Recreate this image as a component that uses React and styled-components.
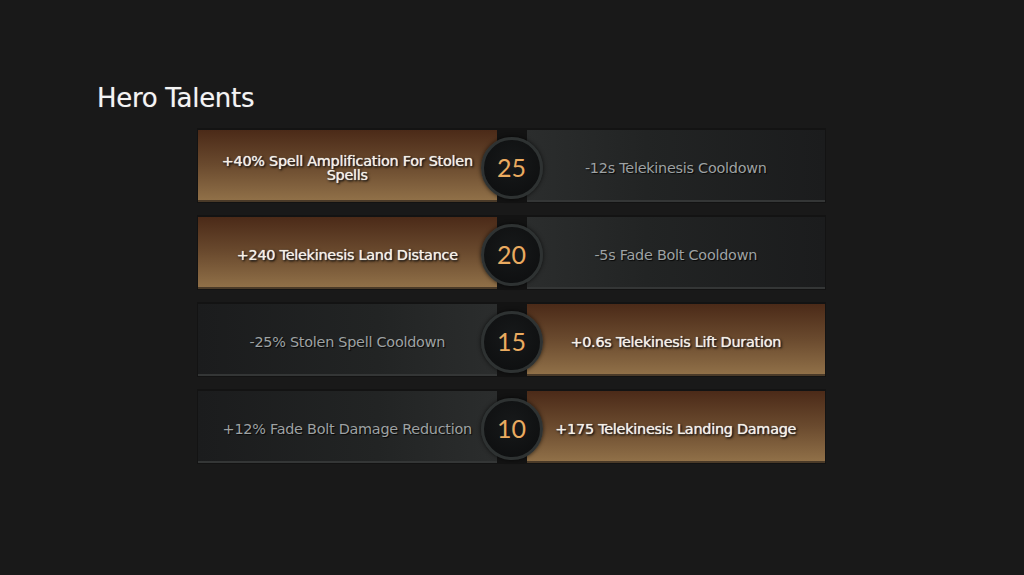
import React from "react";
import styled, { createGlobalStyle } from "styled-components";

// === Page ===
const GlobalStyle = createGlobalStyle`
  html, body {
    margin: 0;
    padding: 0;
    background: #191919;
  }
  body {
    font-family: "DejaVu Sans", sans-serif;
  }
`;

const Page = styled.div`
  width: 1024px;
  height: 575px;
  box-sizing: border-box;
  padding: 82px 0 0 97px;
  background: #191919;
`;

const Heading = styled.h2`
  margin: 0 0 13px 0;
  font-family: "DejaVu Sans", sans-serif;
  font-weight: normal;
  font-size: 26px;
  line-height: 33px;
  color: #f4f4f4;
  letter-spacing: -0.3px;
  text-shadow: 0 0 1px rgba(255, 255, 255, 0.4);
`;

const Tree = styled.div`
  display: flex;
  flex-direction: column;
  gap: 12px;
  width: 629px;
  margin-left: 100px;
`;

// === Row ===
const Row = styled.div`
  display: grid;
  grid-template-columns: 1fr 30px 1fr;
  align-items: stretch;
  height: 75px;
  box-sizing: border-box;
  padding: 2px 1px 1px 1px;
  background: #131313;
`;

const Cell = styled.div`
  display: flex;
  align-items: center;
  justify-content: center;
  padding: 5px 20px 0;
  box-sizing: border-box;
  text-align: center;
  font-family: "DejaVu Sans", sans-serif;
  font-size: 14.4px;
  line-height: 14px;
  letter-spacing: -0.25px;
  border-bottom: 2px solid ${({ picked }) => (picked ? "#4a3a28" : "#343636")};
  background: ${({ picked, side }) =>
    picked
      ? "linear-gradient(180deg, #4b2a18 0%, #6a4a2e 50%, #907048 100%)"
      : side === "left"
      ? "linear-gradient(90deg, #1b1c1d 0%, #222424 60%, #2b2d2d 100%)"
      : "linear-gradient(270deg, #1b1c1d 0%, #222424 60%, #2b2d2d 100%)"};
  color: ${({ picked }) => (picked ? "#f5efe6" : "#9ea2a3")};
  text-shadow: ${({ picked }) =>
    picked
      ? "0 0 1px #fff, 1px 1px 2px rgba(0,0,0,0.95), 1px 1px 3px rgba(0,0,0,0.8)"
      : "1px 1px 1px rgba(0,0,0,0.8)"};
`;

const Level = styled.div`
  display: flex;
  align-items: center;
  justify-content: center;
  align-self: center;
  justify-self: center;
  width: 62px;
  height: 62px;
  margin: 4px -16px 0;
  box-sizing: border-box;
  border-radius: 50%;
  border: 3px solid #2e3232;
  background: radial-gradient(circle at 50% 40%, #17191a 0%, #0c0d0e 100%);
  box-shadow: 0 0 4px rgba(0, 0, 0, 0.7);
  font-family: "Lato", sans-serif;
  font-size: 25px;
  color: #eaab60;
  padding-bottom: 2px;
  z-index: 1;
`;

const talents = [
  { level: 25, left: "+40% Spell Amplification For Stolen Spells", right: "-12s Telekinesis Cooldown", picked: "left" },
  { level: 20, left: "+240 Telekinesis Land Distance", right: "-5s Fade Bolt Cooldown", picked: "left" },
  { level: 15, left: "-25% Stolen Spell Cooldown", right: "+0.6s Telekinesis Lift Duration", picked: "right" },
  { level: 10, left: "+12% Fade Bolt Damage Reduction", right: "+175 Telekinesis Landing Damage", picked: "right" },
];

export default function App() {
  return (
    <Page>
      <GlobalStyle />
      <Heading>Hero Talents</Heading>
      <Tree>
        {talents.map((t) => (
          <Row key={t.level}>
            <Cell side="left" picked={t.picked === "left"}>{t.left}</Cell>
            <Level>{t.level}</Level>
            <Cell side="right" picked={t.picked === "right"}>{t.right}</Cell>
          </Row>
        ))}
      </Tree>
    </Page>
  );
}
